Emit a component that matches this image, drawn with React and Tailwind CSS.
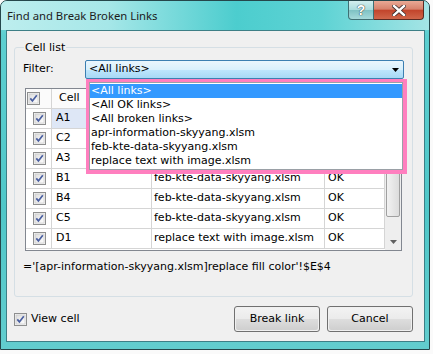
import React from "react";

const F = { fontFamily: '"DejaVu Sans", Tahoma, sans-serif' };

function Check({ className = "" }) {
  return (
    <svg width="13" height="13" viewBox="0 0 13 13" className={className}>
      <defs>
        <linearGradient id="cbg" x1="0" y1="0" x2="1" y2="1">
          <stop offset="0" stopColor="#dcdcdc" />
          <stop offset="1" stopColor="#ffffff" />
        </linearGradient>
      </defs>
      <rect x="0.5" y="0.5" width="12" height="12" fill="#f4f4f4" stroke="#8e8f8f" />
      <rect x="2" y="2" width="9" height="9" fill="url(#cbg)" stroke="#c4c4c4" strokeWidth="0.6" />
      <path d="M3.3 6.4 L5.4 8.9 L9.8 3.2" fill="none" stroke="#4a5fa0" strokeWidth="1.7" />
    </svg>
  );
}

const rows = [
  ["A1", "", "", true],
  ["C2", "", ""],
  ["A3", "", ""],
  ["B1", "feb-kte-data-skyyang.xlsm", "OK"],
  ["B4", "feb-kte-data-skyyang.xlsm", "OK"],
  ["C5", "feb-kte-data-skyyang.xlsm", "OK"],
  ["D1", "replace text with image.xlsm", "OK"],
];

const items = [
  "<All links>",
  "<All OK links>",
  "<All broken links>",
  "apr-information-skyyang.xlsm",
  "feb-kte-data-skyyang.xlsm",
  "replace text with image.xlsm",
];

function Button({ children }) {
  return (
    <div className="w-[86px] h-[26px] rounded-[3px] border border-[#707070] p-px">
      <div className="w-full h-full rounded-[2px] bg-[linear-gradient(#f2f2f2_0%,#ebebeb_48%,#dddddd_52%,#cfcfcf_100%)] flex items-center justify-center text-[11px] text-black">
        {children}
      </div>
    </div>
  );
}

export default function App() {
  return (
    <div className="w-[433px] h-[354px] bg-[#fafafa] overflow-hidden" style={F}>
      <div className="w-[430px] h-[350px] rounded-t-[7px] border border-[#25474b] bg-[linear-gradient(180deg,#8fdfe0_0%,#5ccfd0_10%,#4fc7c8_60%,#62cdce_100%)] flex flex-col">
        <div className="h-[29px] flex items-start justify-between bg-[linear-gradient(90deg,#bdeeee_0%,#a6e7e8_25%,#4ccdce_55%,#5ed3d4_75%,#a4e4e5_100%)] rounded-t-[6px]">
          <div className="pl-[6px] pt-[7px] text-[11.3px] leading-[15px] text-[#1c1c1c]" style={{ fontFamily: '"Noto Sans", sans-serif' }}>
            Find and Break Broken Links
          </div>
          <div className="flex mr-[5px]">
            <div className="w-[26px] h-[19px] rounded-bl-[4px] border border-t-0 border-[#3f6f73] bg-[linear-gradient(#d3eeee_0%,#a9dcdd_50%,#7fc2c4_52%,#a6dadb_100%)] flex items-center justify-center text-[14px] font-bold text-white" style={{ fontFamily: '"Liberation Sans", sans-serif', textShadow: "0 0 1px #333, 0 0 1px #333" }}>
              ?
            </div>
            <div className="w-[50px] h-[19px] rounded-br-[4px] border border-t-0 border-l-0 border-[#5a2a22] bg-[linear-gradient(#e9a995_0%,#d7826c_45%,#c2452c_52%,#d0664a_100%)] flex items-center justify-center">
              <svg width="14" height="11" viewBox="0 0 14 11">
                <path d="M2 1 L12 10 M12 1 L2 10" stroke="#3a2a2a" strokeWidth="4" strokeLinecap="square" />
                <path d="M2 1 L12 10 M12 1 L2 10" stroke="#ffffff" strokeWidth="2.4" strokeLinecap="square" />
              </svg>
            </div>
          </div>
        </div>
        <div className="ml-[5px] w-[419px] h-[312px] border border-[#3d7f86] bg-[#f0f0f0] flex flex-col">
          <fieldset className="mt-[10px] ml-[7px] w-[399px] h-[256px] border border-[#d5dfe5] rounded-[3px] px-[8px]">
            <legend className="px-[1px] ml-[1px] text-[11px] leading-[13px] text-black">Cell list</legend>
            <div className="flex items-center mt-[6px] h-[19px]">
              <div className="w-[62px] text-[11px] text-black">Filter:</div>
              <div className="relative w-[319px] h-[19px] border border-[#3c7fb1] rounded-[2px] bg-[linear-gradient(#eaf6fd_0%,#d9f0fc_50%,#bee6fd_52%,#a7d9f5_100%)] flex items-center justify-between pl-[3px] pr-[4px]">
                <span className="text-[11px] text-black">&lt;All links&gt;</span>
                <svg width="7" height="4" viewBox="0 0 7 4"><path d="M0 0 H7 L3.5 4 Z" fill="#000" /></svg>
                <div className="absolute left-0 top-[18px] w-[321px] border-[3px] border-r-[4px] border-b-[4px] border-[#ff7fbf] z-10">
                  <div className="border border-[#9aa0a6] bg-white py-px">
                    {items.map((t, i) => (
                      <div key={i} className={`h-[14px] leading-[14px] pl-[1px] text-[11px] ${i === 0 ? "bg-[#3399ff] text-white" : "text-black"}`}>
                        {t}
                      </div>
                    ))}
                  </div>
                </div>
              </div>
            </div>
            <div className="mt-[9px] ml-[2px] w-[377px] h-[163px] border border-[#828790] bg-white flex">
              <div className="flex flex-col">
                <div className="flex h-[20px] border-b border-[#d5d5d5] bg-[#fbfbfb]">
                  <div className="w-[26px] border-r border-[#d5d5d5] flex items-center pl-[1px]"><Check /></div>
                  <div className="w-[100px] border-r border-[#d5d5d5] flex items-center pl-[7px] text-[11px]">Cell</div>
                  <div className="w-[173px] border-r border-[#d5d5d5]" />
                  <div className="w-[60px] border-r border-[#d5d5d5]" />
                </div>
                {rows.map(([c, f, s, sel], i) => (
                  <div key={i} className="flex h-[20px] border-b border-[#d5d5d5]">
                    <div className="w-[26px] border-r border-[#d5d5d5] flex items-center pl-[7px]"><Check /></div>
                    <div className={`w-[100px] border-r border-[#d5d5d5] flex items-center pl-[4px] text-[11px] text-black ${sel ? "bg-[#dee7f6]" : ""}`}>{c}</div>
                    <div className="w-[173px] border-r border-[#d5d5d5] flex items-center pl-[2px] text-[11px] text-black whitespace-nowrap">{f}</div>
                    <div className="w-[60px] border-r border-[#d5d5d5] flex items-center pl-[3px] text-[11px] text-black">{s}</div>
                  </div>
                ))}
              </div>
              <div className="w-[16px] h-full bg-[#eeeeee] flex flex-col items-center">
                <div className="h-[16px] w-full flex items-center justify-center">
                  <svg width="7" height="4" viewBox="0 0 7 4"><path d="M0 4 H7 L3.5 0 Z" fill="#606060" /></svg>
                </div>
                <div className="mt-[2px] w-[14px] h-[110px] rounded-[2px] border border-[#a0a0a0] bg-[linear-gradient(90deg,#f2f2f2,#dcdcdc)]" />
                <div className="flex-1" />
                <div className="h-[16px] w-full flex items-center justify-center">
                  <svg width="7" height="4" viewBox="0 0 7 4"><path d="M0 0 H7 L3.5 4 Z" fill="#606060" /></svg>
                </div>
              </div>
            </div>
            <div className="mt-[9px] text-[11px] leading-[13px] text-black whitespace-nowrap">
              ='[apr-information-skyyang.xlsm]replace fill color'!$E$4
            </div>
          </fieldset>
          <div className="flex items-center mt-[9px] pl-[7px] pr-[11px]">
            <Check />
            <span className="ml-[4px] text-[11px] text-black">View cell</span>
            <div className="flex-1" />
            <Button>Break link</Button>
            <div className="w-[7px]" />
            <Button>Cancel</Button>
          </div>
        </div>
      </div>
    </div>
  );
}
